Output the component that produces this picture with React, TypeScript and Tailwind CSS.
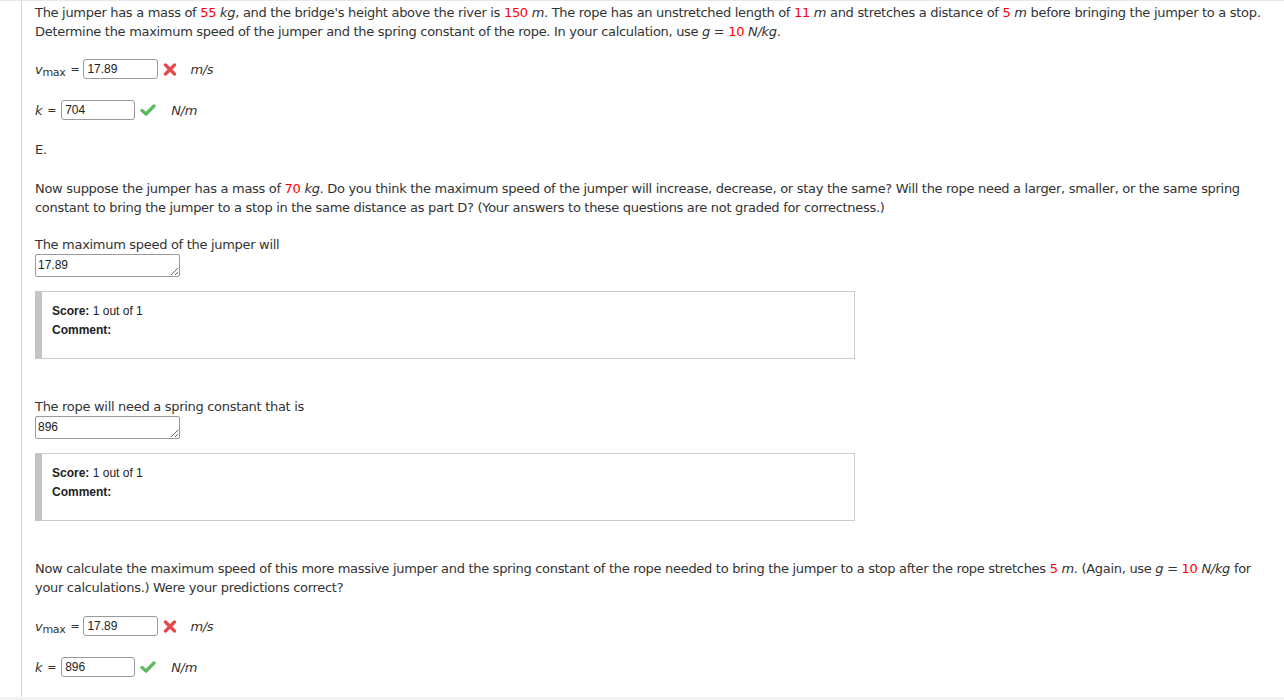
import React from "react";

const body = { fontFamily: '"DejaVu Sans", Verdana, sans-serif' };
const arial = { fontFamily: '"Liberation Sans", Arial, sans-serif' };

function Red({ children }: { children: React.ReactNode }) {
  return <span className="text-[#ff0000]">{children}</span>;
}

function Cross() {
  return (
    <svg width="14" height="13" viewBox="0 0 14 13" className="shrink-0">
      <path d="M2.5 2 L11.5 11 M11.5 2 L2.5 11" stroke="#e5484d" strokeWidth="3.2" strokeLinecap="round" />
    </svg>
  );
}

function Check() {
  return (
    <svg width="16" height="12" viewBox="0 0 16 12" className="shrink-0">
      <path d="M2 6.5 L6 10 L14 2" stroke="#5cb85c" strokeWidth="3.2" strokeLinecap="round" strokeLinejoin="round" fill="none" />
    </svg>
  );
}

function Field({ value, w }: { value: string; w: string }) {
  return (
    <div
      className={`${w} h-[20px] border border-[#9a9a9a] rounded-[3px] bg-white pl-[3px] text-[12px] leading-[18px] text-[#222] tracking-normal`}
      style={arial}
    >
      {value}
    </div>
  );
}

function VmaxRow({ value }: { value: string }) {
  return (
    <div className="flex items-center h-[20px]">
      <span className="italic">v</span>
      <span className="text-[11px] relative top-[3px] mr-[5px]">max</span>
      <span className="text-[11px] mr-[4px]">=</span>
      <Field value={value} w="w-[75px]" />
      <span className="ml-[5px] mr-[13px] flex items-center">
        <Cross />
      </span>
      <span className="italic">m/s</span>
    </div>
  );
}

function KRow({ value }: { value: string }) {
  return (
    <div className="flex items-center h-[20px]">
      <span className="italic mr-[5px]">k</span>
      <span className="text-[11px] mr-[5px]">=</span>
      <Field value={value} w="w-[74px]" />
      <span className="ml-[5px] mr-[15px] flex items-center">
        <Check />
      </span>
      <span className="italic">N/m</span>
    </div>
  );
}

function TextBox({ value }: { value: string }) {
  return (
    <textarea
      readOnly
      value={value}
      className="block w-[145px] h-[23px] border border-[#9a9a9a] rounded-[2px] px-[2px] py-[1px] text-[12px] leading-[18px] text-[#222] bg-white resize overflow-hidden tracking-normal"
      style={arial}
    />
  );
}

function ScoreBox() {
  return (
    <div
      className="w-[820px] h-[68px] border border-[#cccccc] border-l-[7px] border-l-[#c4c4c4] pl-[10px] pt-[10px] text-[12px] leading-[19px] text-[#222] tracking-normal"
      style={arial}
    >
      <div>
        <span className="font-bold">Score:</span> 1 out of 1
      </div>
      <div className="font-bold">Comment:</div>
    </div>
  );
}

export default function App() {
  return (
    <div className="w-[1284px] h-[700px] bg-white overflow-hidden flex flex-col border-t border-[#e8e8e8]">
      <div
        className="flex-1 ml-[21px] border-l border-[#d6d6d6] pl-[13px] pr-[14px] pt-[2px] text-[13px] leading-[19px] tracking-[-0.3px] text-[#333]"
        style={body}
      >
        <p>
          The jumper has a mass of <Red>55</Red> <i>kg</i>, and the bridge's height above the river is <Red>150</Red>{" "}
          <i>m</i>. The rope has an unstretched length of <Red>11</Red> <i>m</i> and stretches a distance of{" "}
          <Red>5</Red> <i>m</i> before bringing the jumper to a stop. Determine the maximum speed of the jumper and
          the spring constant of the rope. In your calculation, use <i>g</i> = <Red>10</Red> <i>N/kg</i>.
        </p>

        <div className="mt-[18px]">
          <VmaxRow value="17.89" />
        </div>
        <div className="mt-[21px]">
          <KRow value="704" />
        </div>

        <p className="mt-[20px]">E.</p>

        <p className="mt-[20px]">
          Now suppose the jumper has a mass of <Red>70</Red> <i>kg</i>. Do you think the maximum speed of the jumper
          will increase, decrease, or stay the same? Will the rope need a larger, smaller, or the same spring constant
          to bring the jumper to a stop in the same distance as part D? (Your answers to these questions are not graded
          for correctness.)
        </p>

        <p className="mt-[18px]">The maximum speed of the jumper will</p>
        <TextBox value="17.89" />
        <div className="mt-[14px]">
          <ScoreBox />
        </div>

        <p className="mt-[38px]">The rope will need a spring constant that is</p>
        <TextBox value="896" />
        <div className="mt-[14px]">
          <ScoreBox />
        </div>

        <p className="mt-[38px]">
          Now calculate the maximum speed of this more massive jumper and the spring constant of the rope needed to
          bring the jumper to a stop after the rope stretches <Red>5</Red> <i>m</i>. (Again, use <i>g</i> ={" "}
          <Red>10</Red> <i>N/kg</i> for your calculations.) Were your predictions correct?
        </p>

        <div className="mt-[19px]">
          <VmaxRow value="17.89" />
        </div>
        <div className="mt-[21px]">
          <KRow value="896" />
        </div>
      </div>
      <div className="h-[3px] bg-[#f2f2f2]" />
    </div>
  );
}
